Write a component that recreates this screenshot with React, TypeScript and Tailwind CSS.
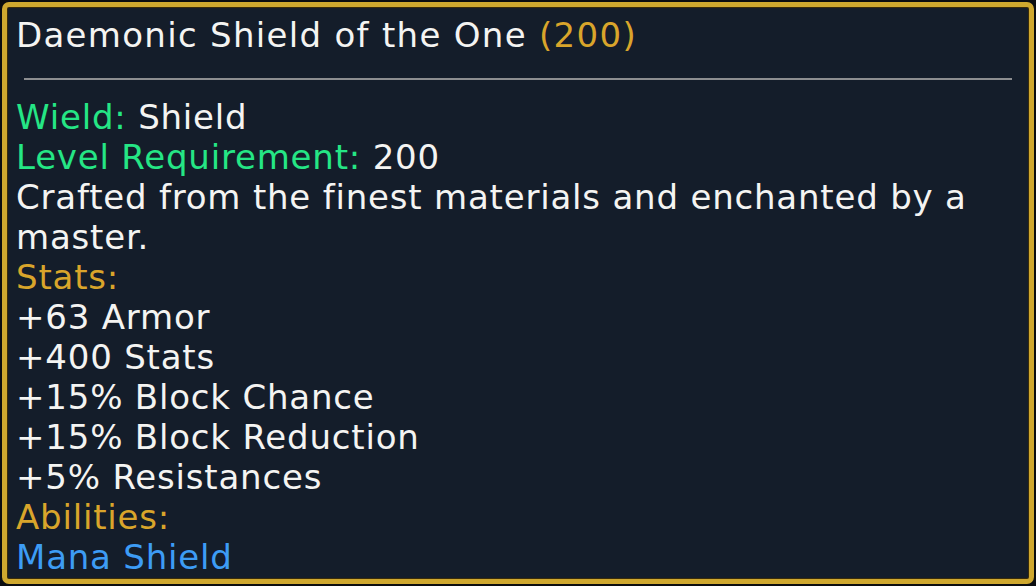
import React from "react";

export default function App() {
  const white = "text-[#f4f4f2]";
  const green = "text-[#25e685]";
  const gold = "text-[#d9a52b]";
  return (
    <div className="w-[1036px] h-[586px] bg-[#0b0d10] p-[2px]">
      <div
        className="w-full h-full rounded-[7px] border-[5px] border-[#cfa82f] bg-[#141d2a] shadow-[inset_0_0_0_1px_#3a2c0a] flex flex-col px-[9px] tracking-[0.8px]"
        style={{ fontFamily: "'DejaVu Sans', 'Open Sans', sans-serif" }}
      >
        <div className={`h-[40px] mt-[8px] leading-[40px] text-[34px] tracking-[1.3px] whitespace-nowrap ${white}`}>
          Daemonic Shield of the One <span className={gold}>(200)</span>
        </div>
        <div className="mt-[23px] mx-[8px] h-[2px] bg-[#8d8e90]" />
        <div className={`mt-[17px] w-[990px] text-[34px] leading-[40px] ${white}`}>
          <div className="whitespace-nowrap">
            <span className={green}>Wield: </span>Shield
          </div>
          <div className="whitespace-nowrap">
            <span className={green}>Level Requirement: </span>200
          </div>
          <div>Crafted from the finest materials and enchanted by a master.</div>
          <div className={gold}>Stats:</div>
          <div>+63 Armor</div>
          <div>+400 Stats</div>
          <div>+15% Block Chance</div>
          <div>+15% Block Reduction</div>
          <div>+5% Resistances</div>
          <div className={gold}>Abilities:</div>
          <div className="text-[#3d9cf5]">Mana Shield</div>
        </div>
      </div>
    </div>
  );
}
